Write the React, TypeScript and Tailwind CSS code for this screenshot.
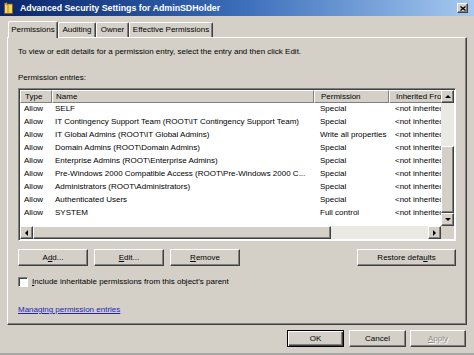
import React from 'react';

const raised =
  'border border-t-white border-l-white border-r-[#404040] border-b-[#404040] shadow-[inset_-1px_-1px_0_#808080]';
const sunken =
  'border border-t-[#808080] border-l-[#808080] border-r-white border-b-white shadow-[inset_1px_1px_0_#404040]';

const rows: [string, string, string][] = [
  ['Allow', 'SELF', 'Special'],
  ['Allow', 'IT Contingency Support Team (ROOT\\IT Contingency Support Team)', 'Special'],
  ['Allow', 'IT Global Admins (ROOT\\IT Global Admins)', 'Write all properties'],
  ['Allow', 'Domain Admins (ROOT\\Domain Admins)', 'Special'],
  ['Allow', 'Enterprise Admins (ROOT\\Enterprise Admins)', 'Special'],
  ['Allow', 'Pre-Windows 2000 Compatible Access (ROOT\\Pre-Windows 2000 C...', 'Special'],
  ['Allow', 'Administrators (ROOT\\Administrators)', 'Special'],
  ['Allow', 'Authenticated Users', 'Special'],
  ['Allow', 'SYSTEM', 'Full control'],
];

function Arrow({ dir }: { dir: 'up' | 'down' | 'left' | 'right' }) {
  const pts = {
    up: '0,3 3,0 6,3',
    down: '0,0 3,3 6,0',
    left: '3,0 0,3 3,6',
    right: '0,0 3,3 0,6',
  }[dir];
  const vertical = dir === 'up' || dir === 'down';
  return (
    <svg width={vertical ? 6 : 3} height={vertical ? 3 : 6} viewBox={vertical ? '0 0 6 3' : '0 0 3 6'}>
      <polygon points={pts} fill="#000" />
    </svg>
  );
}

function ScrollButton({ dir }: { dir: 'up' | 'down' | 'left' | 'right' }) {
  return (
    <div className={`${raised} w-[13px] h-[13px] shrink-0 bg-[#d4d0c8] flex items-center justify-center`}>
      <Arrow dir={dir} />
    </div>
  );
}

function Btn({
  children,
  w,
  isDefault,
  disabled,
}: {
  children: React.ReactNode;
  w: string;
  isDefault?: boolean;
  disabled?: boolean;
}) {
  const look = isDefault
    ? 'border border-black shadow-[inset_1px_1px_0_#fff,inset_-1px_-1px_0_#404040,inset_-2px_-2px_0_#808080]'
    : raised;
  return (
    <button
      className={`${look} ${w} h-[17px] bg-[#d4d0c8] text-[8px] leading-[10px] flex items-center justify-center ${
        disabled ? 'text-[#8d8b86] [text-shadow:1px_1px_0_#fff]' : 'text-black'
      }`}
    >
      {children}
    </button>
  );
}

export default function App() {
  return (
    <div className="w-[474px] h-[355px] bg-[#d4d0c8] flex flex-col font-['Liberation_Sans',Arial,sans-serif] text-black overflow-hidden select-none">
      {/* Title bar */}
      <div className="h-[16px] shrink-0 bg-gradient-to-r from-[#0a246a] via-[#3a6cb8] to-[#a6caf0] flex items-center pl-[4px] pr-[6px]">
        <svg width="9" height="12" viewBox="0 0 9 12" className="shrink-0">
          <path d="M0.5 1.5 L3 0.5 L3 2 L8.5 2 L8.5 11.5 L0.5 11.5 Z" fill="#f4d35e" stroke="#7a5a10" strokeWidth="0.8" />
          <path d="M0.5 1.5 L4 3 L4 11.5" fill="none" stroke="#a07a20" strokeWidth="0.8" />
        </svg>
        <span className="ml-[7px] text-white font-bold text-[8.8px] leading-[11px]">
          Advanced Security Settings for AdminSDHolder
        </span>
        <div className="flex-1" />
        <div className={`${raised} w-[11px] h-[10px] bg-[#d4d0c8] flex items-center justify-center`}>
          <svg width="6" height="5" viewBox="0 0 6 5">
            <path d="M0.5 0.5 L5.5 4.5 M5.5 0.5 L0.5 4.5" stroke="#000" strokeWidth="1.3" />
          </svg>
        </div>
      </div>

      {/* Tabs */}
      <div className="h-[21px] shrink-0 flex items-end pl-[8px]">
        <div className="relative z-10 -mb-px h-[17px] w-[50px] bg-[#d4d0c8] border-t border-l border-t-white border-l-white border-r border-r-[#404040] shadow-[inset_-1px_0_0_#808080] rounded-t-[2px] flex items-start justify-center pt-[3px] text-[8px] leading-[10px]">
          Permissions
        </div>
        {['Auditing', 'Owner', 'Effective Permissions'].map((t, i) => (
          <div
            key={t}
            className={`h-[15px] ${['w-[38px]', 'w-[33px]', 'w-[84px]'][i]} bg-[#d4d0c8] border-t border-l border-t-white border-l-white border-r border-r-[#404040] shadow-[inset_-1px_0_0_#808080] rounded-t-[2px] flex items-start justify-center pt-[2px] text-[8px] leading-[10px]`}
          >
            {t}
          </div>
        ))}
      </div>

      {/* Tab page */}
      <div className={`${raised} mx-[7px] h-[288px] shrink-0 flex flex-col pl-[10px] pt-[9px]`}>
        <div className="text-[8px] leading-[10px]">
          To view or edit details for a permission entry, select the entry and then click Edit.
        </div>
        <div className="mt-[16px] text-[8px] leading-[10px]">Permission entries:</div>

        {/* List */}
        <div className={`${sunken} mt-[5px] w-[438px] h-[153px] bg-white flex flex-col p-px`}>
          <div className="flex h-[136px]">
            <div className="flex-1 overflow-hidden">
              <div className="flex h-[13px] text-[8px] leading-[10px] whitespace-nowrap">
                {[
                  ['Type', 'w-[32px] pl-[4px]'],
                  ['Name', 'w-[262px] pl-[3px]'],
                  ['Permission', 'w-[75px] pl-[6px]'],
                  ['Inherited From', 'w-[80px] pl-[6px]'],
                ].map(([h, c]) => (
                  <div
                    key={h}
                    className={`${c} shrink-0 h-[13px] bg-[#d4d0c8] border-t border-l border-t-white border-l-white border-r border-r-[#808080] border-b border-b-[#808080] flex items-center overflow-hidden`}
                  >
                    {h}
                  </div>
                ))}
              </div>
              {rows.map(([type, name, perm]) => (
                <div key={name} className="flex h-[12.9px] items-center text-[8px] leading-[10px] whitespace-nowrap">
                  <div className="w-[32px] pl-[4px] shrink-0">{type}</div>
                  <div className="w-[262px] pl-[3px] shrink-0 overflow-hidden">{name}</div>
                  <div className="w-[75px] pl-[6px] shrink-0">{perm}</div>
                  <div className="w-[80px] pl-[6px] shrink-0">&lt;not inherited&gt;</div>
                </div>
              ))}
            </div>
            <div className="w-[13px] shrink-0 flex flex-col">
              <ScrollButton dir="up" />
              <div className="h-[43px] bg-[#ebe9e4]" />
              <div className={`${raised} flex-1 bg-[#d4d0c8]`} />
              <ScrollButton dir="down" />
            </div>
          </div>
          <div className="flex h-[13px]">
            <ScrollButton dir="left" />
            <div className={`${raised} w-[298px] shrink-0 bg-[#d4d0c8]`} />
            <div className="flex-1 bg-[#ebe9e4]" />
            <ScrollButton dir="right" />
            <div className="w-[13px] shrink-0 bg-[#d4d0c8]" />
          </div>
        </div>

        {/* Action buttons */}
        <div className="mt-[8px] w-[438px] flex items-center">
          <Btn w="w-[70px]">
            A<span className="underline">d</span>d...
          </Btn>
          <div className="w-[6px]" />
          <Btn w="w-[70px]">
            <span className="underline">E</span>dit...
          </Btn>
          <div className="w-[6px]" />
          <Btn w="w-[70px]">
            <span className="underline">R</span>emove
          </Btn>
          <div className="flex-1" />
          <Btn w="w-[99px]">
            Restore defa<span className="underline">u</span>lts
          </Btn>
        </div>

        {/* Checkbox */}
        <div className="mt-[11px] flex items-center">
          <div className={`${sunken} w-[10px] h-[10px] bg-white shrink-0`} />
          <span className="ml-[4px] text-[8px] leading-[10px]">
            <span className="underline">I</span>nclude inheritable permissions from this object's parent
          </span>
        </div>

        <div className="mt-[18px] text-[8px] leading-[10px] text-[#2424b4] underline">
          Managing permission entries
        </div>
      </div>

      {/* Dialog buttons */}
      <div className="mt-[5px] flex items-center justify-end pr-[8px]">
        <Btn w="w-[57px]" isDefault>
          OK
        </Btn>
        <div className="w-[5px]" />
        <Btn w="w-[57px]">Cancel</Btn>
        <div className="w-[4px]" />
        <Btn w="w-[56px]" disabled>
          <span className="underline">A</span>pply
        </Btn>
      </div>
      <div className="flex-1" />
      <div className="h-[2px] bg-[#a9a7a2]" />
    </div>
  );
}
